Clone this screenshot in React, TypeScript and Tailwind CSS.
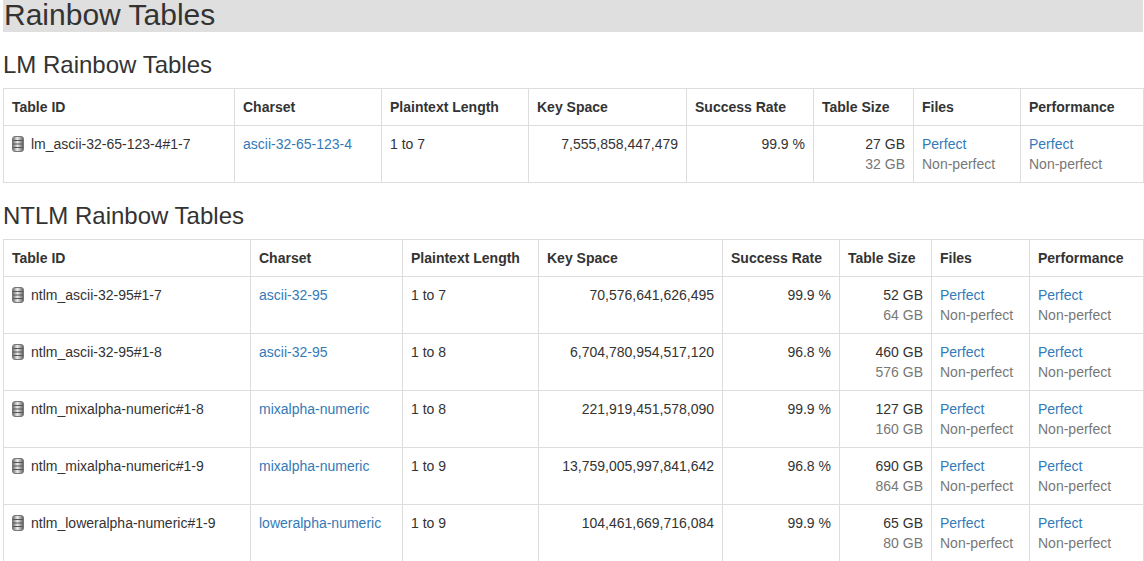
import React from "react";

type Row = {
  id: string;
  charset: string;
  length: string;
  keyspace: string;
  rate: string;
  perfect: string;
  nonPerfect: string;
};

const lmRows: Row[] = [
  {
    id: "lm_ascii-32-65-123-4#1-7",
    charset: "ascii-32-65-123-4",
    length: "1 to 7",
    keyspace: "7,555,858,447,479",
    rate: "99.9 %",
    perfect: "27 GB",
    nonPerfect: "32 GB",
  },
];

const ntlmRows: Row[] = [
  {
    id: "ntlm_ascii-32-95#1-7",
    charset: "ascii-32-95",
    length: "1 to 7",
    keyspace: "70,576,641,626,495",
    rate: "99.9 %",
    perfect: "52 GB",
    nonPerfect: "64 GB",
  },
  {
    id: "ntlm_ascii-32-95#1-8",
    charset: "ascii-32-95",
    length: "1 to 8",
    keyspace: "6,704,780,954,517,120",
    rate: "96.8 %",
    perfect: "460 GB",
    nonPerfect: "576 GB",
  },
  {
    id: "ntlm_mixalpha-numeric#1-8",
    charset: "mixalpha-numeric",
    length: "1 to 8",
    keyspace: "221,919,451,578,090",
    rate: "99.9 %",
    perfect: "127 GB",
    nonPerfect: "160 GB",
  },
  {
    id: "ntlm_mixalpha-numeric#1-9",
    charset: "mixalpha-numeric",
    length: "1 to 9",
    keyspace: "13,759,005,997,841,642",
    rate: "96.8 %",
    perfect: "690 GB",
    nonPerfect: "864 GB",
  },
  {
    id: "ntlm_loweralpha-numeric#1-9",
    charset: "loweralpha-numeric",
    length: "1 to 9",
    keyspace: "104,461,669,716,084",
    rate: "99.9 %",
    perfect: "65 GB",
    nonPerfect: "80 GB",
  },
];

const headers = [
  "Table ID",
  "Charset",
  "Plaintext Length",
  "Key Space",
  "Success Rate",
  "Table Size",
  "Files",
  "Performance",
];

// small gray "stacked disks" table icon
function TableIcon() {
  return (
    <svg width="12" height="16" viewBox="0 0 12 16" className="inline-block mr-[7px] -mt-[3px] align-middle">
      <defs>
        <linearGradient id="dbg" x1="0" x2="1" y1="0" y2="0">
          <stop offset="0" stopColor="#6b6b6b" />
          <stop offset="0.45" stopColor="#ececec" />
          <stop offset="1" stopColor="#5e5e5e" />
        </linearGradient>
      </defs>
      <rect x="0.5" y="0.5" width="11" height="15" rx="2.5" fill="url(#dbg)" stroke="#777" />
      <line x1="1" y1="4.5" x2="11" y2="4.5" stroke="#555" />
      <line x1="1" y1="8" x2="11" y2="8" stroke="#555" />
      <line x1="1" y1="11.5" x2="11" y2="11.5" stroke="#555" />
    </svg>
  );
}

function RainbowTable({ rows, widths }: { rows: Row[]; widths: number[] }) {
  const cell = "border border-[#ddd] p-2 align-top";
  return (
    <table className="w-full table-fixed border-collapse">
      <colgroup>
        {widths.map((w, i) => (
          <col key={i} style={{ width: w }} />
        ))}
      </colgroup>
      <thead>
        <tr>
          {headers.map((h) => (
            <th key={h} className={`${cell} text-left font-bold`}>
              {h}
            </th>
          ))}
        </tr>
      </thead>
      <tbody>
        {rows.map((r) => (
          <tr key={r.id}>
            <td className={`${cell} whitespace-nowrap`}>
              <TableIcon />
              {r.id}
            </td>
            <td className={cell}>
              <a href="#" className="text-[#337ab7]">
                {r.charset}
              </a>
            </td>
            <td className={cell}>{r.length}</td>
            <td className={`${cell} text-right`}>{r.keyspace}</td>
            <td className={`${cell} text-right`}>{r.rate}</td>
            <td className={`${cell} text-right`}>
              <div>{r.perfect}</div>
              <div className="text-[#777]">{r.nonPerfect}</div>
            </td>
            <td className={cell}>
              <a href="#" className="block text-[#337ab7]">
                Perfect
              </a>
              <span className="text-[#777]">Non-perfect</span>
            </td>
            <td className={cell}>
              <a href="#" className="block text-[#337ab7]">
                Perfect
              </a>
              <span className="text-[#777]">Non-perfect</span>
            </td>
          </tr>
        ))}
      </tbody>
    </table>
  );
}

export default function App() {
  return (
    <div className="bg-white pl-[3px] pr-px text-[14px] leading-[20px] text-[#333] font-['Liberation_Sans',Arial,sans-serif]">
      <h1 className="bg-[#dfdfdf] text-[30px] leading-[30px] h-[32px] font-normal pl-px">Rainbow Tables</h1>
      <h3 className="mt-5 mb-[10px] text-[24px] leading-[26px] font-normal">LM Rainbow Tables</h3>
      <RainbowTable rows={lmRows} widths={[231, 147, 147, 158, 127, 100, 107, 123]} />
      <h3 className="mt-5 mb-[10px] text-[24px] leading-[26px] font-normal">NTLM Rainbow Tables</h3>
      <RainbowTable rows={ntlmRows} widths={[247, 152, 136, 184, 117, 92, 98, 114]} />
    </div>
  );
}
